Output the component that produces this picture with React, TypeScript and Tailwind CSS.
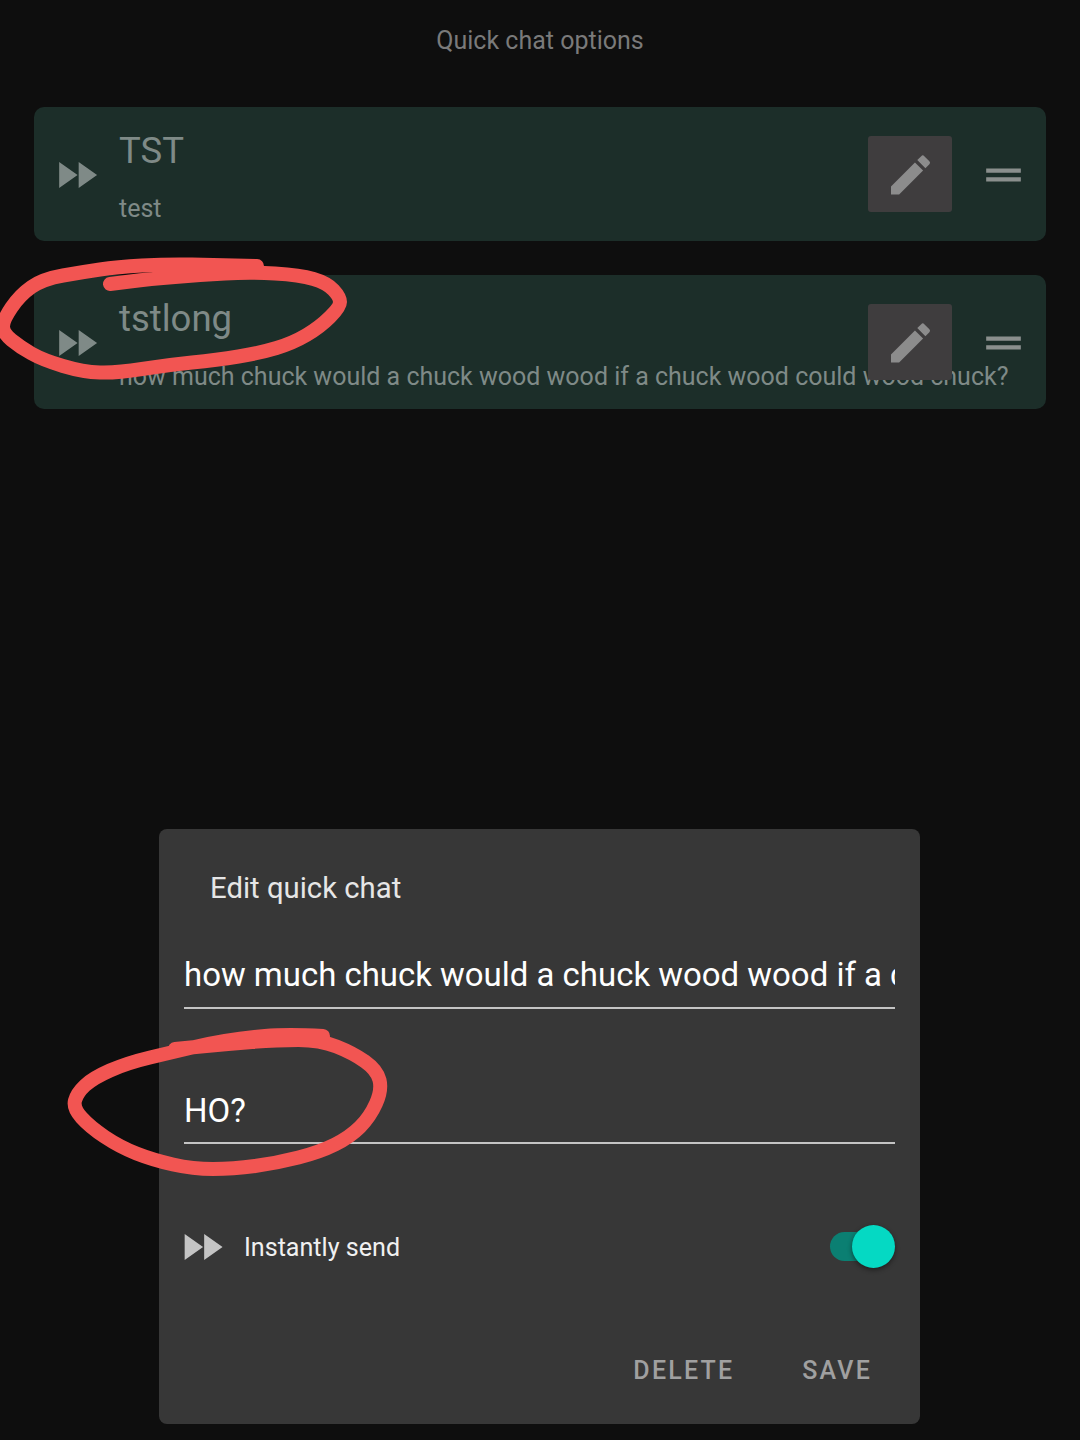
import { MdDragHandle, MdEdit, MdFastForward } from "react-icons/md";

interface QuickChat {
  name: string;
  message: string;
}

const chats: QuickChat[] = [
  { name: "TST", message: "test" },
  { name: "tstlong", message: "how much chuck would a chuck wood wood if a chuck wood could wood chuck?" },
];

// hand drawn markup, traced as points and smoothed through the midpoints
const circleTop = [
  [257, 266], [217, 265], [167, 264], [117, 267], [83, 272], [43, 279], [20, 295], [3, 320], [3, 333], [20, 347],
  [43, 360], [83, 372], [117, 373], [167, 365], [217, 360], [260, 353], [293, 343], [320, 327], [340, 307], [340, 297],
  [327, 283], [300, 275], [250, 272], [200, 275], [150, 279], [110, 284],
];
const circleBottom = [
  [323, 1036], [287, 1034], [243, 1038], [207, 1044], [173, 1052], [127, 1063], [93, 1078], [77, 1093], [73, 1108],
  [90, 1127], [120, 1147], [153, 1160], [193, 1169], [233, 1169], [277, 1163], [320, 1152], [350, 1137], [370, 1117],
  [382, 1090], [377, 1070], [353, 1053], [320, 1040], [277, 1040], [227, 1044], [175, 1049],
];

function smooth(points: number[][]) {
  let d = `M${points[0][0]} ${points[0][1]}`;
  for (let i = 1; i < points.length - 1; i++) {
    const mx = (points[i][0] + points[i + 1][0]) / 2;
    const my = (points[i][1] + points[i + 1][1]) / 2;
    d += `Q${points[i][0]} ${points[i][1]} ${mx} ${my}`;
  }
  const last = points[points.length - 1];
  return d + `L${last[0]} ${last[1]}`;
}

function ChatRow({ chat }: { chat: QuickChat }) {
  return (
    <div className="flex h-[134px] items-center rounded-[10px] bg-[#1c2e29] px-4">
      <MdFastForward size={52} className="mt-[2px] shrink-0 translate-x-[0.5px] text-[#7f8a87]" />
      <div className="ml-[17px] flex h-full min-w-0 flex-1 flex-col whitespace-nowrap text-[#7f8a87]">
        <div className="mt-[20px] h-[48px] text-[36.5px] leading-[48px]">{chat.name}</div>
        <div className="mt-[18px] text-[25px] leading-[32px]">{chat.message}</div>
      </div>
      <button
        type="button"
        className="relative flex h-[76px] w-[84px] shrink-0 items-center justify-center rounded-[3px] bg-[#3f3d3e] text-[#8c8c8c]"
      >
        <MdEdit size={52} className="mt-[1px] translate-x-[0.5px]" />
      </button>
      <MdDragHandle size={52} className="ml-[26px] mt-[1px] shrink-0 -translate-x-[0.5px] text-[#8a8f8d]" />
    </div>
  );
}

export default function App() {
  return (
    <div className="relative h-[1440px] w-[1080px] overflow-hidden bg-[#0e0e0e] font-['Roboto',sans-serif]">
      <div className="pt-[25px] text-center text-[25px] leading-[32px] text-[#7a7a7a]">Quick chat options</div>

      <div className="mx-[34px] mt-[50px] flex flex-col gap-[34px]">
        {chats.map((c) => (
          <ChatRow key={c.name} chat={c} />
        ))}
      </div>

      <div className="ml-[159px] mr-[160px] mt-[420px] h-[595px] rounded-[8px] bg-[#373737] px-[25px]">
        <div className="pl-[26px] pt-[41px] text-[29.3px] leading-[36px] text-[#e6e6e6]">Edit quick chat</div>

        <div className="mt-[47px] h-[56px] overflow-hidden whitespace-nowrap border-b-2 border-[#c4c4c4] text-[32.95px] leading-[44px] text-white">
          how much chuck would a chuck wood wood if a chuck wood could wood chuck?
        </div>
        <div className="mt-[79px] h-[56px] border-b-2 border-[#c4c4c4] pt-[1px] text-[33px] leading-[44px] text-white">HO?</div>

        <div className="mt-[78px] flex h-[52px] items-center">
          <MdFastForward size={52} className="-ml-[8.5px] shrink-0 -translate-y-[1px] text-[#c4c4c4]" />
          <span className="ml-[16.5px] flex-1 text-[25.1px] text-[#f0f0f0]">Instantly send</span>
          <div className="relative mb-[4px] mr-[7px] h-[29px] w-[58px] rounded-full bg-[#0b7f72]">
            <div className="absolute right-[-7px] top-[-7px] h-[43px] w-[43px] rounded-full bg-[#05d9c3] shadow-[0_2px_5px_rgba(0,0,0,0.45)]" />
          </div>
        </div>

        <div className="mt-[78px] flex justify-end gap-[68px] pr-[23px] text-[25px] font-medium tracking-[2.2px] text-[#a0a0a0]">
          <span>DELETE</span>
          <span>SAVE</span>
        </div>
      </div>

      <svg className="absolute inset-0" width="1080" height="1440" fill="none" stroke="#f25552" strokeLinecap="round" strokeLinejoin="round" strokeWidth="14">
        <path d={smooth(circleTop)} />
        <path d={smooth(circleBottom)} />
      </svg>
    </div>
  );
}
